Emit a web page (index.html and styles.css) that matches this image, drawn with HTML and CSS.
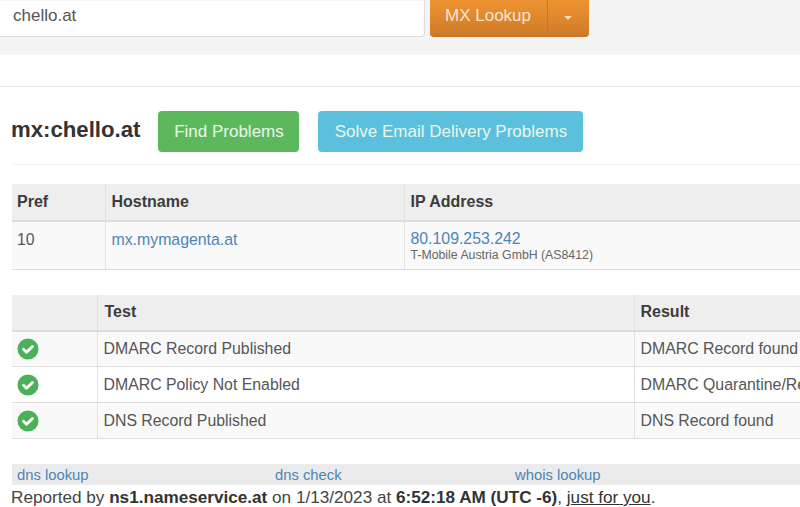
FILE: index.html
```html
<!DOCTYPE html>
<html lang="en">
<head>
<meta charset="utf-8">
<title>mx:chello.at</title>
<link rel="stylesheet" href="styles.css">
</head>
<body>
<div class="searchbar">
  <div class="domain-input">chello.at</div>
  <div class="btn-group">
    <div class="btn-main">MX Lookup</div>
    <div class="btn-caret"><span class="caret"></span></div>
  </div>
</div>
<main class="content">
  <div class="title-row">
    <h1 class="title">mx:chello.at</h1>
    <a class="btn btn-green">Find Problems</a>
    <a class="btn btn-blue">Solve Email Delivery Problems</a>
  </div>
  <table class="grid grid-mx">
    <colgroup><col class="c-pref"><col class="c-host"><col class="c-ip"></colgroup>
    <thead><tr><th>Pref</th><th>Hostname</th><th>IP Address</th></tr></thead>
    <tbody>
      <tr class="mx-row">
        <td>10</td>
        <td><a class="link">mx.mymagenta.at</a></td>
        <td><a class="link ip">80.109.253.242</a><small class="asn">T-Mobile Austria GmbH (AS8412)</small></td>
      </tr>
    </tbody>
  </table>
  <table class="grid grid-test">
    <colgroup><col class="c-icon"><col class="c-test"><col class="c-result"></colgroup>
    <thead><tr><th></th><th class="th-test">Test</th><th>Result</th></tr></thead>
    <tbody>
      <tr class="odd">
        <td class="icon-cell"><svg class="check" viewBox="0 0 22 22"><circle cx="11" cy="11" r="10.5"/><path d="M6.5 11.3l3 3L15.5 8.4"/></svg></td>
        <td>DMARC Record Published</td><td>DMARC Record found</td>
      </tr>
      <tr>
        <td class="icon-cell"><svg class="check" viewBox="0 0 22 22"><circle cx="11" cy="11" r="10.5"/><path d="M6.5 11.3l3 3L15.5 8.4"/></svg></td>
        <td>DMARC Policy Not Enabled</td><td>DMARC Quarantine/Reject</td>
      </tr>
      <tr class="odd">
        <td class="icon-cell"><svg class="check" viewBox="0 0 22 22"><circle cx="11" cy="11" r="10.5"/><path d="M6.5 11.3l3 3L15.5 8.4"/></svg></td>
        <td>DNS Record Published</td><td>DNS Record found</td>
      </tr>
    </tbody>
  </table>
  <nav class="tools">
    <a class="link tool-a">dns lookup</a>
    <a class="link tool-b">dns check</a>
    <a class="link">whois lookup</a>
  </nav>
  <p class="report">Reported by <b>ns1.nameservice.at</b> on 1/13/2023 at <b>6:52:18 AM (UTC -6)</b>, <u>just for you</u>.</p>
</main>
</body>
</html>
```
FILE: styles.css
```css
* { box-sizing: border-box; }
html, body { margin: 0; padding: 0; height: 100%; overflow: hidden; background: #fff; }
body { width: 800px; height: 507px; font-family: "Liberation Sans", Arial, sans-serif; font-size: 16px; color: #333; }

.searchbar { height: 55px; background: #f4f4f4; display: flex; align-items: flex-start; gap: 5px; }
.domain-input { width: 425px; height: 37px; background: #fff; border: 1px solid #ddd; border-width: 0 1px 1px 0; border-radius: 0 0 4px 0; padding: 6px 0 0 13px; font-size: 17px; line-height: 20px; color: #555; box-shadow: inset 0 1px 1px rgba(0,0,0,.04); }
.btn-group { display: flex; height: 37px; color: #f6e6d4; border-radius: 0 0 4px 4px; overflow: hidden; background: linear-gradient(#ef9433, #cd7a27); border-bottom: 1px solid #c17222; }
.btn-main { width: 118px; padding: 6px 0 0 15px; font-size: 17px; line-height: 20px; border-right: 1px solid #c87725; }
.btn-caret { width: 41px; display: flex; align-items: center; justify-content: center; padding: 0 2px 1px 0; }
.caret { width: 0; height: 0; border: 4px solid transparent; border-top-color: #f3d9bb; border-bottom: 0; }

.content { border-top: 1px solid #e3e3e3; margin-top: 31px; padding-left: 12px; }
.title-row { height: 78px; padding-top: 24px; display: flex; align-items: flex-start; border-bottom: 1px solid #f2f2f2; }
.title { margin: 7px 18px 0 -1px; font-size: 22.2px; line-height: 24px; font-weight: 700; color: #333; }
.btn { height: 41px; border-radius: 4px; color: #eaf6ea; font-size: 17px; line-height: 41px; text-align: center; }
.btn-green { width: 141px; background: #5cb85c; margin-right: 19px; }
.btn-blue { width: 265px; background: #5bc0de; }

.grid { border-collapse: collapse; table-layout: fixed; width: 900px; font-size: 15.85px; }
.grid th { background: #eee; font-weight: 700; font-size: 16px; text-align: left; border-bottom: 2px solid #ddd; border-left: 1px solid #e2e2e2; padding: 0 6px; color: #3c3c3c; }
.grid th:first-child, .grid td:first-child { border-left: 0; }
.grid .th-test { padding-left: 7px; }
.grid td { border-bottom: 1px solid #ddd; border-left: 1px solid #e2e2e2; padding: 0 6px; color: #555; }
.link { color: #4a86b8; }
.grid-mx { margin-top: 19px; }
.grid-mx th { height: 37px; }
.grid-mx th:first-child, .grid-mx td:first-child { padding-left: 5px; }
.grid-mx .mx-row { background: #f9f9f9; height: 48px; }
.grid-mx td { vertical-align: top; padding-top: 8px; line-height: 20px; }
.c-pref { width: 93px; }
.c-host { width: 299px; }
.c-ip { width: 508px; }
.ip { display: block; line-height: 18px; }
.asn { display: block; font-size: 12.3px; line-height: 14px; color: #666; }

.grid-test { margin-top: 25px; }
.grid-test th { height: 36px; }
.grid-test td { height: 36px; }
.grid-test tr.odd { background: #f9f9f9; }
.c-icon { width: 85px; }
.c-test { width: 537px; }
.c-result { width: 278px; }
.icon-cell { line-height: 0; }
.grid .icon-cell { padding: 0 5px; }
.check { width: 22px; height: 22px; }
.check circle { fill: #4cb05a; }
.check path { fill: none; stroke: #fff; stroke-width: 2.8; stroke-linecap: round; stroke-linejoin: round; }

.tools { margin-top: 25px; height: 21px; background: #ebebeb; display: flex; padding: 1px 0 0 5px; line-height: 21px; font-size: 14.8px; }
.tool-a { width: 258px; }
.tool-b { width: 240px; }
.report { margin: 1px 0 0 -1px; font-size: 17.15px; line-height: 22px; color: #444; }
.report b { color: #333; }
.report u { color: #333; }
```
